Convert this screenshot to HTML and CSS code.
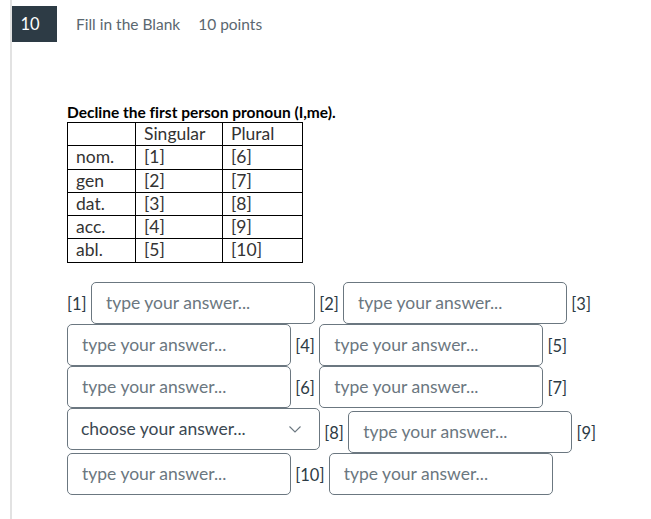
FILE: index.html
```html
<!DOCTYPE html>
<html>
<head>
<meta charset="utf-8">
<link rel="stylesheet" href="styles.css">
</head>
<body>
<div class="question">
  <div class="q-header">
    <span class="q-num">10</span>
    <span class="q-type">Fill in the Blank</span>
    <span class="q-points">10 points</span>
  </div>
  <div class="q-body">
    <p class="q-title">Decline the first person pronoun (I,me).</p>
    <table class="decl">
      <colgroup><col class="c0"><col class="c1"><col class="c2"></colgroup>
      <tr><td></td><td>Singular</td><td>Plural</td></tr>
      <tr><td>nom.</td><td>[1]</td><td>[6]</td></tr>
      <tr><td>gen</td><td>[2]</td><td>[7]</td></tr>
      <tr><td>dat.</td><td>[3]</td><td>[8]</td></tr>
      <tr><td>acc.</td><td>[4]</td><td>[9]</td></tr>
      <tr><td>abl.</td><td>[5]</td><td>[10]</td></tr>
    </table>
    <div class="answers">
      <span class="lbl">[1]</span> <input class="ans" type="text" placeholder="type your answer..."> <span class="lbl">[2]</span> <input class="ans" type="text" placeholder="type your answer..."> <span class="lbl">[3]</span> <input class="ans" type="text" placeholder="type your answer..."> <span class="lbl">[4]</span> <input class="ans" type="text" placeholder="type your answer..."> <span class="lbl">[5]</span> <input class="ans" type="text" placeholder="type your answer..."> <span class="lbl">[6]</span> <input class="ans" type="text" placeholder="type your answer..."> <span class="lbl">[7]</span> <span class="sel-wrap"><select class="sel"><option>choose your answer...</option></select><svg class="chev" width="12" height="7" viewBox="0 0 12 7"><path d="M0.5 0.5 L6 6 L11.5 0.5" fill="none" stroke="#6b7780" stroke-width="1.1"/></svg></span> <span class="lbl">[8]</span> <input class="ans" type="text" placeholder="type your answer..."> <span class="lbl">[9]</span> <input class="ans" type="text" placeholder="type your answer..."> <span class="lbl">[10]</span> <input class="ans" type="text" placeholder="type your answer...">
    </div>
  </div>
</div>
</body>
</html>
```
FILE: styles.css
```css
html, body {
  margin: 0;
  padding: 0;
  background: #ffffff;
}
body {
  font-family: Lato, "Liberation Sans", sans-serif;
  color: #2d3b45;
  font-variant-ligatures: none;
}
.question {
  margin-left: 10px;
  border-left: 2px solid #e2e2e2;
  height: 519px;
  box-sizing: border-box;
  overflow: hidden;
}
.q-header {
  display: flex;
  align-items: center;
  height: 36px;
  margin-top: 6px;
  margin-left: -9px;
}
.q-num {
  width: 54px;
  height: 36px;
  background: #2d3b45;
  color: #ffffff;
  font-size: 16.5px;
  display: flex;
  align-items: center;
  justify-content: center;
}
.q-type {
  margin-left: 19px;
  font-size: 15.5px;
  color: #5b6770;
}
.q-points {
  margin-left: 18px;
  font-size: 15.5px;
  color: #5b6770;
}
.q-body {
  padding-left: 55px;
}
.q-title {
  margin: 61px 0 1px 0;
  font-size: 15.5px;
  line-height: 18px;
  font-weight: bold;
  color: #000000;
}
.decl {
  border-collapse: collapse;
  table-layout: fixed;
  width: 235px;
  font-size: 17.5px;
  color: #333333;
}
.decl td {
  border: 1px solid #000000;
  padding: 1px 8px;
  line-height: 20.3px;
  white-space: nowrap;
}
.c0 { width: 68px; }
.c1 { width: 87px; }
.c2 { width: 80px; }
.answers {
  margin-top: 19px;
  font-size: 16.5px;
  color: #2d3b45;
}
.lbl {
  color: #2d3b45;
}
.ans {
  box-sizing: border-box;
  width: 224px;
  height: 42px;
  margin: 0;
  padding: 0 14px;
  border: 1px solid #6b7780;
  border-radius: 5px;
  font-family: Lato, "Liberation Sans", sans-serif;
  font-size: 17.5px;
  color: #2d3b45;
  background: #ffffff;
  outline: none;
}
.ans::placeholder {
  color: #6b7780;
  opacity: 1;
}
.sel-wrap {
  position: relative;
  display: inline-block;
  vertical-align: 3px;
}
.sel {
  appearance: none;
  -webkit-appearance: none;
  box-sizing: border-box;
  width: 253px;
  height: 42px;
  margin: 0;
  padding: 0 13px;
  border: 1px solid #6b7780;
  border-radius: 5px;
  font-family: Lato, "Liberation Sans", sans-serif;
  font-size: 17.5px;
  color: #3b4852;
  background: #ffffff;
}
.chev {
  position: absolute;
  right: 19px;
  top: 18px;
}
```
